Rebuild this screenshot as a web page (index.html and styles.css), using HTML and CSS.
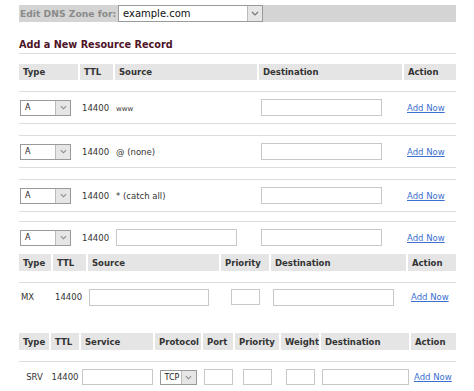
FILE: index.html
```html
<!DOCTYPE html>
<html lang="en">

<head>
  <meta charset="UTF-8">
  <title>Edit DNS Zone</title>
  <link rel="stylesheet" href="styles.css">
</head>

<body>

  <div class="page">

    <!-- zone picker -->
    <div class="zone-bar">
      <span class="zone-label">Edit DNS Zone for:</span>
      <span class="select select-zone">
        <span class="select-value">example.com</span>
        <span class="select-arrow"><svg viewBox="0 0 8 5" width="8" height="5"><path d="M1 1 L4 4 L7 1" fill="none" stroke="#777" stroke-width="1.2"/></svg></span>
      </span>
    </div>

    <h2 class="section-title">Add a New Resource Record</h2>

    <!-- A records -->
    <table class="records records-a">
      <colgroup>
        <col style="width:60px"><col style="width:35px"><col style="width:144px"><col style="width:145px"><col style="width:53px">
      </colgroup>
      <tr class="head">
        <th>Type</th><th>TTL</th><th>Source</th><th>Destination</th><th>Action</th>
      </tr>
      <tr class="gap"><td colspan="5"></td></tr>
      <tr class="rec">
        <td class="c-type"><span class="select select-type"><span class="select-value">A</span><span class="select-arrow"><svg viewBox="0 0 8 5" width="7" height="5"><path d="M1 1 L4 4 L7 1" fill="none" stroke="#888" stroke-width="1.2"/></svg></span></span></td>
        <td class="c-ttl">14400</td>
        <td class="c-src"><span class="small">www</span></td>
        <td class="c-dest"><input class="field field-wide" type="text"></td>
        <td class="c-act"><a href="#">Add Now</a></td>
      </tr>
      <tr class="gap"><td colspan="5"></td></tr>
      <tr class="rec">
        <td class="c-type"><span class="select select-type"><span class="select-value">A</span><span class="select-arrow"><svg viewBox="0 0 8 5" width="7" height="5"><path d="M1 1 L4 4 L7 1" fill="none" stroke="#888" stroke-width="1.2"/></svg></span></span></td>
        <td class="c-ttl">14400</td>
        <td class="c-src">@ (none)</td>
        <td class="c-dest"><input class="field field-wide" type="text"></td>
        <td class="c-act"><a href="#">Add Now</a></td>
      </tr>
      <tr class="gap"><td colspan="5"></td></tr>
      <tr class="rec">
        <td class="c-type"><span class="select select-type"><span class="select-value">A</span><span class="select-arrow"><svg viewBox="0 0 8 5" width="7" height="5"><path d="M1 1 L4 4 L7 1" fill="none" stroke="#888" stroke-width="1.2"/></svg></span></span></td>
        <td class="c-ttl">14400</td>
        <td class="c-src">* (catch all)</td>
        <td class="c-dest"><input class="field field-wide" type="text"></td>
        <td class="c-act"><a href="#">Add Now</a></td>
      </tr>
      <tr class="gap gap-short"><td colspan="5"></td></tr>
      <tr class="rec rec-open">
        <td class="c-type"><span class="select select-type"><span class="select-value">A</span><span class="select-arrow"><svg viewBox="0 0 8 5" width="7" height="5"><path d="M1 1 L4 4 L7 1" fill="none" stroke="#888" stroke-width="1.2"/></svg></span></span></td>
        <td class="c-ttl">14400</td>
        <td class="c-src"><input class="field field-wide" type="text"></td>
        <td class="c-dest"><input class="field field-wide" type="text"></td>
        <td class="c-act"><a href="#">Add Now</a></td>
      </tr>
    </table>

    <!-- MX record -->
    <table class="records records-mx">
      <colgroup>
        <col style="width:33px"><col style="width:35px"><col style="width:133px"><col style="width:50px"><col style="width:137px"><col style="width:49px">
      </colgroup>
      <tr class="head">
        <th>Type</th><th>TTL</th><th>Source</th><th>Priority</th><th>Destination</th><th>Action</th>
      </tr>
      <tr class="gap"><td colspan="6"></td></tr>
      <tr class="rec rec-open">
        <td class="c-label">MX</td>
        <td class="c-ttl">14400</td>
        <td class="c-src"><input class="field field-mx" type="text"></td>
        <td class="c-center"><input class="field field-num" type="text"></td>
        <td class="c-dest"><input class="field field-wide" type="text"></td>
        <td class="c-act"><a href="#">Add Now</a></td>
      </tr>
    </table>

    <!-- SRV record -->
    <table class="records records-srv">
      <colgroup>
        <col style="width:31px"><col style="width:30px"><col style="width:74px"><col style="width:48px"><col style="width:32px"><col style="width:46px"><col style="width:40px"><col style="width:90px"><col style="width:46px">
      </colgroup>
      <tr class="head">
        <th>Type</th><th>TTL</th><th>Service</th><th>Protocol</th><th>Port</th><th>Priority</th><th>Weight</th><th>Destination</th><th>Action</th>
      </tr>
      <tr class="gap"><td colspan="9"></td></tr>
      <tr class="rec rec-open">
        <td class="c-center">SRV</td>
        <td class="c-center">14400</td>
        <td class="c-tight"><input class="field field-service" type="text"></td>
        <td class="c-center"><span class="select select-proto"><span class="select-value">TCP</span><span class="select-arrow"><svg viewBox="0 0 8 5" width="7" height="5"><path d="M1 1 L4 4 L7 1" fill="none" stroke="#888" stroke-width="1.2"/></svg></span></span></td>
        <td class="c-center"><input class="field field-num" type="text"></td>
        <td class="c-center"><input class="field field-num" type="text"></td>
        <td class="c-center"><input class="field field-num" type="text"></td>
        <td class="c-tight"><input class="field field-srv" type="text"></td>
        <td class="c-act"><a href="#">Add Now</a></td>
      </tr>
    </table>

  </div>

</body>

</html>
```

FILE: styles.css
```css
body {
  margin: 0;
  background: #fff;
  font-family: "DejaVu Sans", Verdana, sans-serif;
  color: #333;
}

.page {
  width: 437px;
  padding: 5px 0 0 19px;
}

/* 上部のゾーン選択バー */
.zone-bar {
  display: flex;
  align-items: center;
  height: 17px;
  background: #d4d4d4;
}

.zone-label {
  padding-left: 1px;
  width: 98px;
  font-size: 9.2px;
  font-weight: bold;
  color: #8a8a8a;
  white-space: nowrap;
}

/* 疑似セレクト */
.select {
  display: inline-flex;
  align-items: stretch;
  box-sizing: border-box;
  border: 1px solid #9a9a9a;
  background: #fff;
  vertical-align: middle;
}

.select-value {
  flex: 1;
  display: flex;
  align-items: center;
  padding-left: 4px;
  font-size: 8px;
  color: #222;
}

.select-arrow {
  display: flex;
  align-items: center;
  justify-content: center;
  width: 14px;
  background: #e6e6e6;
  border-left: 1px solid #bcbcbc;
}

.select-zone {
  width: 145px;
  height: 17px;
}

.select-zone .select-value {
  font-size: 10px;
  color: #111;
}

.select-type {
  width: 51px;
  height: 16px;
}

.select-proto {
  width: 37px;
  height: 15px;
}

.section-title {
  margin: 17px 0 0;
  padding-bottom: 3px;
  border-bottom: 1px solid #dcdcdc;
  font-size: 9.7px;
  font-weight: bold;
  color: #4e1428;
}

/* レコード表 */
.records {
  width: 437px;
  table-layout: fixed;
  border-collapse: collapse;
  font-size: 8.5px;
}

.records-a {
  margin-top: 10px;
}

.records-mx {
  margin-top: 1px;
}

.records-srv {
  margin-top: 22px;
}

.records th {
  height: 16px;
  padding: 0 0 0 4px;
  background: #e5e5e5;
  border-left: 2px solid #fff;
  text-align: left;
  font-weight: bold;
  color: #333;
  white-space: nowrap;
}

.records th:first-child {
  border-left: none;
}

.records-mx th,
.records-srv th {
  height: 17px;
}

.gap td {
  height: 11px;
  padding: 0;
}

.gap-short td {
  height: 9px;
}

.rec td {
  height: 31px;
  padding: 0 0 0 3px;
  border-top: 1px solid #dcdcdc;
  border-bottom: 1px solid #dcdcdc;
  white-space: nowrap;
}

.rec-open td {
  border-bottom: none;
}

.records-mx .rec td {
  height: 28px;
}

.records-srv .rec td {
  height: 30px;
}

.rec .c-type {
  padding-left: 1px;
}

.rec .c-ttl {
  padding-left: 3px;
}

.rec .c-label {
  padding-left: 2px;
}

.rec .c-src {
  padding-left: 2px;
}

.rec .c-center {
  padding: 0;
  text-align: center;
}

.rec .c-tight {
  padding-left: 2px;
}

.rec .c-act {
  padding-left: 4px;
}

.small {
  font-size: 7px;
}

.field {
  box-sizing: border-box;
  height: 17px;
  margin: 0;
  padding: 0 2px;
  border: 1px solid #c8c8c8;
  background: #fff;
  vertical-align: middle;
}

.field-wide {
  width: 121px;
}

.field-mx {
  width: 120px;
}

.field-num {
  width: 29px;
  height: 16px;
}

.field-service {
  width: 71px;
  height: 16px;
}

.field-srv {
  width: 87px;
  height: 16px;
}

.records a {
  color: #3c6fcf;
  text-decoration: underline;
}
```
